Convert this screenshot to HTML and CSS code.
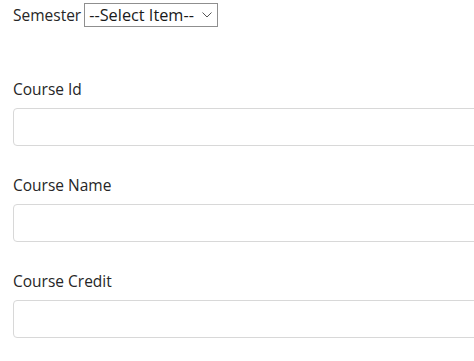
FILE: index.html
```html
<!DOCTYPE html>
<html lang="en">
<head>
<meta charset="utf-8">
<title>Course</title>
<link rel="stylesheet" href="styles.css">
</head>
<body>
<div class="page">
  <div class="semester-row">
    <span class="semester-label">Semester</span>
    <span class="select-wrap">
      <select class="select">
        <option>--Select Item--</option>
      </select>
      <svg class="chevron" width="10" height="6" viewBox="0 0 10 6"><path d="M0.5 0.5 L5 5 L9.5 0.5" fill="none" stroke="#555" stroke-width="1"/></svg>
    </span>
  </div>
  <div class="fields">
    <div class="form-group">
      <label class="label">Course Id</label>
      <input class="input" type="text">
    </div>
    <div class="form-group">
      <label class="label">Course Name</label>
      <input class="input" type="text">
    </div>
    <div class="form-group">
      <label class="label">Course Credit</label>
      <input class="input" type="text">
    </div>
  </div>
</div>
</body>
</html>
```

FILE: styles.css
```css
html, body {
  margin: 0;
  padding: 0;
  overflow: hidden;
  background: #fff;
}
body {
  font-family: "Open Sans", "Noto Sans", sans-serif;
  font-size: 15.5px;
  color: #262626;
}
.page {
  padding: 3px 0 0 13px;
}
.semester-row {
  display: flex;
  align-items: center;
  gap: 3px;
  height: 24px;
}
.semester-label {
  font-size: 15.5px;
  line-height: 24px;
}
.select-wrap {
  position: relative;
  display: block;
  height: 24px;
}
.select {
  appearance: none;
  -webkit-appearance: none;
  display: block;
  width: 134px;
  height: 24px;
  box-sizing: border-box;
  border: 1px solid #8f8f8f;
  border-radius: 0;
  background: #fff;
  font-family: inherit;
  font-size: 16.3px;
  color: #1a1a1a;
  padding: 0 0 0 4px;
  margin: 0;
}
.chevron {
  position: absolute;
  right: 6px;
  top: 9px;
  pointer-events: none;
}
.fields {
  margin-top: 50px;
}
.form-group {
  margin-bottom: 27px;
}
.label {
  display: block;
  line-height: 24px;
  margin-bottom: 7px;
}
.input {
  display: block;
  width: 480px;
  height: 38px;
  box-sizing: border-box;
  border: 1px solid #d8d8d8;
  border-radius: 4px;
  margin: 0;
  padding: 0 12px;
  background: #fff;
}
```
